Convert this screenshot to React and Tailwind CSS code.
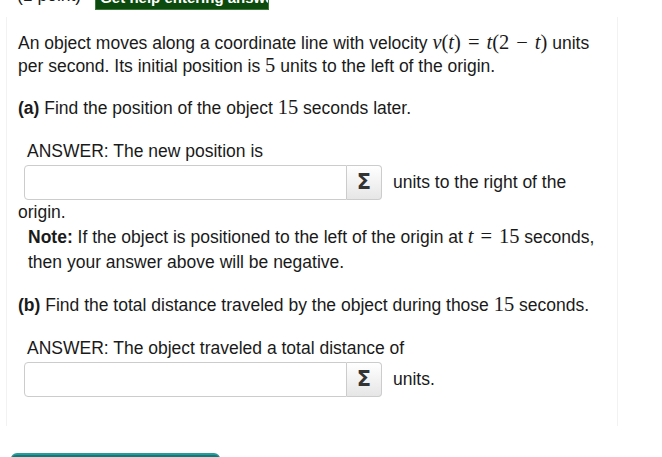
import React from 'react'

const M = ({ children }) => (
  <span className="font-['Liberation_Serif',serif] text-[20.5px] leading-none">{children}</span>
)
const I = ({ children }) => <i className="italic">{children}</i>
const Op = ({ children }) => <span className="mx-[7px]">{children}</span>

const AnswerBox = ({ after }) => (
  <div className="flex items-center h-[35px] mt-[2px] ml-[6px]">
    <div className="h-[35px] w-[323px] border border-[#cccccc] rounded-l-[4px] bg-white" />
    <div className="h-[35px] w-[35px] border border-l-0 border-[#cccccc] rounded-r-[4px] bg-gradient-to-b from-white to-[#e6e6e6] flex items-center justify-center">
      <span className="font-['DejaVu_Sans',sans-serif] font-bold text-[21px] text-[#333] leading-none">Σ</span>
    </div>
    <span className="ml-[11px]">{after}</span>
  </div>
)

export default function App() {
  return (
    <div className="relative w-[662px] h-[457px] overflow-hidden bg-white font-['Liberation_Sans',Arial,sans-serif] text-[17.5px] text-[#1a1a1a]">
      <div className="flex items-end h-[10px] ml-[17px] gap-[14px]">
        <span className="leading-none mb-[6px]">(1 point)</span>
        <div className="h-[24px] w-[174px] bg-[#0d4a0d] border border-[#3b7a3b] text-white font-bold text-[15px] leading-[22px] px-1 text-center shrink-0 whitespace-nowrap overflow-hidden">
          Get help entering answers
        </div>
      </div>
      <div className="ml-[6px] mt-[7px] w-[612px] h-[409px] border-l border-r border-[#f2f2f2] pl-[11px] pt-[15px]">
        <p className="leading-[23px]">
          An object moves along a coordinate line with velocity{' '}
          <M><I>v</I>(<I>t</I>)<Op>=</Op><I>t</I>(2<Op>−</Op><I>t</I>)</M> units per second. Its initial position is{' '}
          <M>5</M> units to the left of the origin.
        </p>
        <p className="leading-[23px] mt-[19px]">
          <b>(a)</b> Find the position of the object <M>15</M> seconds later.
        </p>
        <p className="leading-[23px] mt-[20px] ml-[9px]">ANSWER: The new position is</p>
        <AnswerBox after="units to the right of the" />
        <p className="leading-[25px]">origin.</p>
        <p className="leading-[25px] ml-[10px]">
          <b>Note:</b> If the object is positioned to the left of the origin at <M><I>t</I><Op>=</Op>15</M> seconds,
          <br />
          then your answer above will be negative.
        </p>
        <p className="leading-[23px] mt-[19px]">
          <b>(b)</b> Find the total distance traveled by the object during those <M>15</M> seconds.
        </p>
        <p className="leading-[23px] mt-[20px] ml-[9px]">ANSWER: The object traveled a total distance of</p>
        <AnswerBox after="units." />
      </div>
      <div className="ml-[11px] mt-[27px] w-[209px] h-[20px] rounded-t-[6px] bg-[#0d7a7a] border-t-2 border-[#2a9a9a]" />
    </div>
  )
}
